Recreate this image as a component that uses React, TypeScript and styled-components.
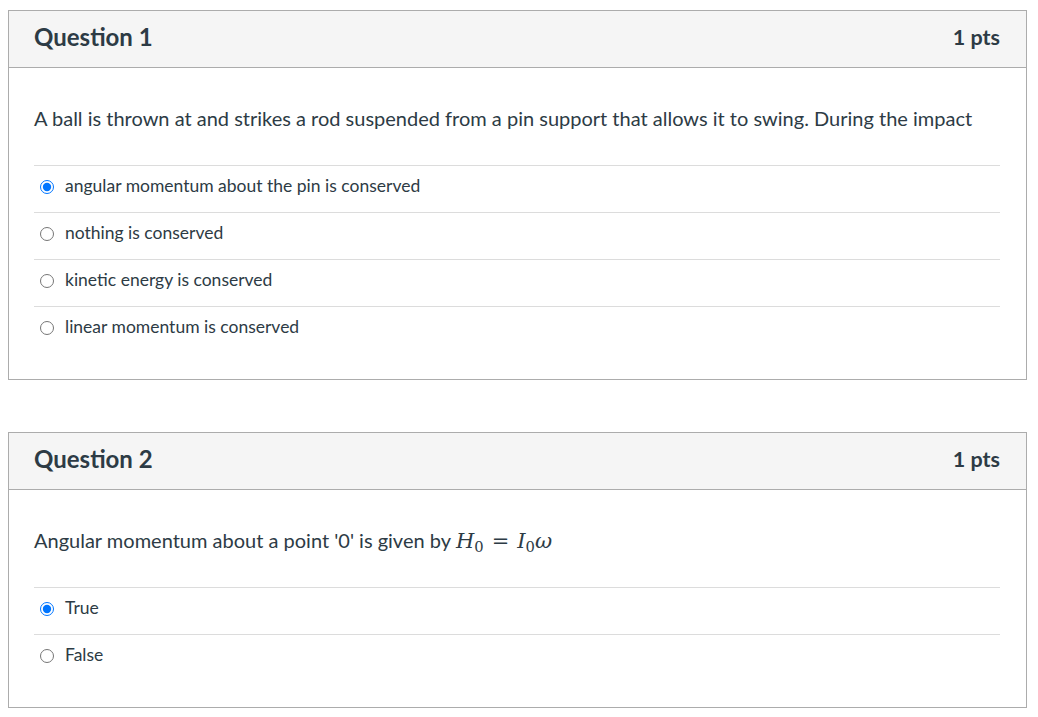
import React from "react";
import styled, { createGlobalStyle } from "styled-components";

const GlobalStyle = createGlobalStyle`
  body {
    margin: 0;
    background: #ffffff;
    font-family: Lato, "Open Sans", Arial, sans-serif;
    color: #2d3b45;
  }
`;

const Page = styled.div`
  padding: 10px 11px 10px 8px;
  display: flex;
  flex-direction: column;
  gap: 52px;
`;

const Card = styled.div`
  border: 1px solid #acacac;
  background: #ffffff;
`;

const Header = styled.div`
  height: 57px;
  box-sizing: border-box;
  background: #f5f5f5;
  border-bottom: 1px solid #acacac;
  display: flex;
  align-items: center;
  justify-content: space-between;
  padding: 0 26px 5px 25px;
`;

const Title = styled.h2`
  margin: 0;
  font-size: 24px;
  font-weight: 700;
  color: #2d3b45;
`;

const Points = styled.span`
  font-size: 21.5px;
  font-weight: 700;
  color: #2d3b45;
`;

const Body = styled.div`
  padding: 36px 26px 26px 25px;
`;

const QuestionText = styled.p`
  margin: 0 0 33px;
  font-size: 20px;
  line-height: 28px;
  height: 28px;
  color: #2d3b45;
`;

const Math = styled.span`
  font-family: "DejaVu Serif", "Liberation Serif", serif;
  font-size: 21px;
  line-height: 0;
  white-space: nowrap;
  margin-left: 5px;
`;

const Var = styled.i`
  font-style: italic;
`;

const Sub = styled.span`
  font-size: 0.7em;
  font-style: normal;
  position: relative;
  top: 0.3em;
`;

const Eq = styled.span`
  margin: 0 8px;
`;

const Answer = styled.label`
  display: flex;
  align-items: center;
  height: 39px;
  padding-bottom: 7px;
  border-top: 1px solid #dcdcdc;
  font-size: 17.5px;
  color: #2d3b45;
`;

const Radio = styled.input`
  width: 14px;
  height: 14px;
  margin: 2px 11px 0 6px;
`;

type Choice = { text: string; checked?: boolean };

const Question: React.FC<{
  title: string;
  name: string;
  text: React.ReactNode;
  choices: Choice[];
}> = ({ title, name, text, choices }) => (
  <Card>
    <Header>
      <Title>{title}</Title>
      <Points>1 pts</Points>
    </Header>
    <Body>
      <QuestionText>{text}</QuestionText>
      {choices.map((c) => (
        <Answer key={c.text}>
          <Radio type="radio" name={name} defaultChecked={c.checked} />
          {c.text}
        </Answer>
      ))}
    </Body>
  </Card>
);

export default function App() {
  return (
    <Page>
      <GlobalStyle />
      <Question
        title="Question 1"
        name="q1"
        text="A ball is thrown at and strikes a rod suspended from a pin support that allows it to swing. During the impact"
        choices={[
          { text: "angular momentum about the pin is conserved", checked: true },
          { text: "nothing is conserved" },
          { text: "kinetic energy is conserved" },
          { text: "linear momentum is conserved" },
        ]}
      />
      <Question
        title="Question 2"
        name="q2"
        text={
          <>
            Angular momentum about a point '0' is given by
            <Math>
              <Var>H</Var>
              <Sub>0</Sub>
              <Eq>=</Eq>
              <Var>I</Var>
              <Sub>0</Sub>
              <Var>ω</Var>
            </Math>
          </>
        }
        choices={[{ text: "True", checked: true }, { text: "False" }]}
      />
    </Page>
  );
}
